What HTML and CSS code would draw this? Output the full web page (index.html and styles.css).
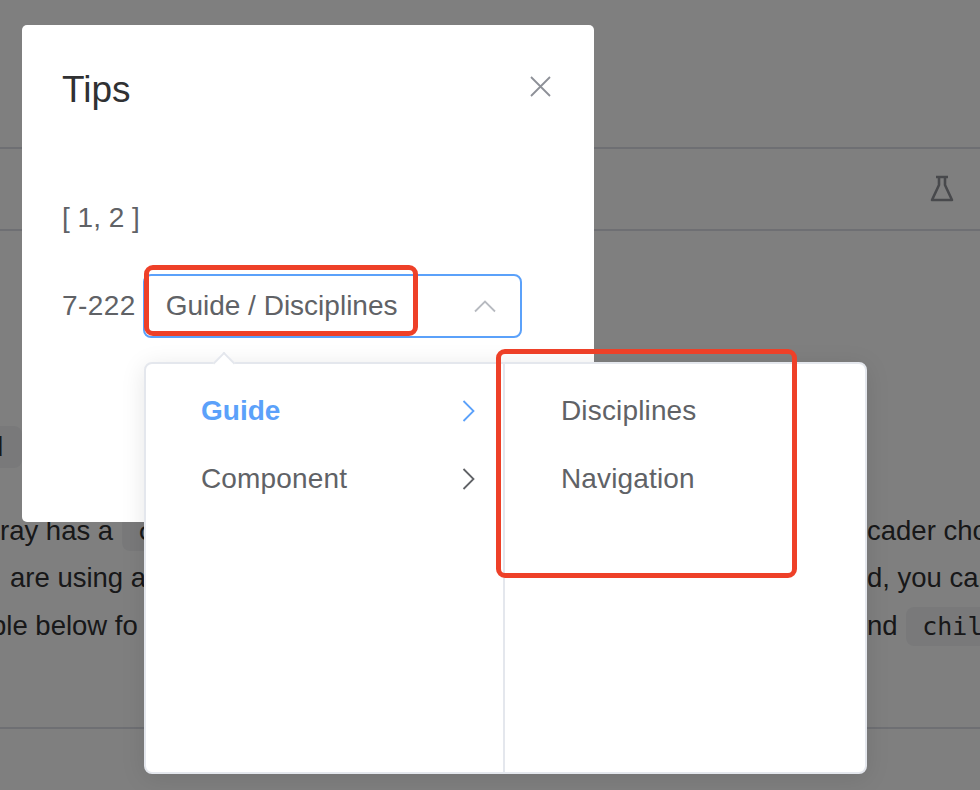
FILE: index.html
```html
<!DOCTYPE html>
<html lang="en">
<head>
<meta charset="utf-8">
<title>Cascader tips</title>
<link rel="stylesheet" href="styles.css">
</head>
<body>
<main class="page">
  <div class="top-band"></div>
  <div class="toolbar">
    <svg class="flask" width="24" height="28" viewBox="0 0 24 28" fill="none" stroke="#909399" stroke-width="2.6" stroke-linejoin="round"><path d="M6 2h12M9 2v8L2 25h20L15 10V2"/></svg>
  </div>
  <section class="doc">
    <div class="doc-line first"><span class="snippet">d</span></div>
    <div class="doc-line para one"><span>ray has a <code>c</code></span><span>cader cho</span></div>
    <div class="doc-line para two"><span>are using a</span><span>d, you can</span></div>
    <div class="doc-line para three"><span>ble below fo</span><span>nd <code>chil</code></span></div>
  </section>
</main>

<div class="overlay"></div>

<div class="modal" role="dialog" aria-label="Tips">
  <header class="modal-head">
    <h2 class="modal-title">Tips</h2>
    <svg class="close" width="21" height="21" viewBox="0 0 21 21" fill="none" stroke="#8d9097" stroke-width="1.8"><path d="M1 1l19 19M20 1L1 20"/></svg>
  </header>
  <p class="value">[ 1, 2 ]</p>
  <div class="field">
    <span class="field-label">7-222</span>
    <div class="select">
      <span>Guide / Disciplines</span>
      <svg width="22" height="14" viewBox="0 0 22 14" fill="none" stroke="#b7bac0" stroke-width="1.8"><path d="M1 12.5L11 2.5l10 10"/></svg>
    </div>
  </div>
</div>

<div class="dropdown">
  <span class="caret"></span>
  <ul class="menu menu-first">
    <li class="item active">
      <span>Guide</span>
      <svg width="13" height="22" viewBox="0 0 13 22" fill="none" stroke="#5ba1fa" stroke-width="1.8"><path d="M1.5 1l10 10-10 10"/></svg>
    </li>
    <li class="item">
      <span>Component</span>
      <svg width="13" height="22" viewBox="0 0 13 22" fill="none" stroke="#606266" stroke-width="1.8"><path d="M1.5 1l10 10-10 10"/></svg>
    </li>
  </ul>
  <ul class="menu menu-second">
    <li class="item">Disciplines</li>
    <li class="item">Navigation</li>
  </ul>
</div>

<div class="mark mark-select"></div>
<div class="mark mark-menu"></div>
</body>
</html>
```

FILE: styles.css
```css
* { box-sizing: border-box; }
html, body { margin: 0; height: 790px; overflow: hidden; }
body {
  position: relative;
  width: 980px;
  background: #fff;
  font-family: "Liberation Sans", Arial, sans-serif;
  color: #606266;
}

/* underlying page */
.page { height: 790px; display: flex; flex-direction: column; color: #303133; }
.top-band { height: 149px; border-bottom: 2px solid #dcdfe6; }
.toolbar {
  height: 82px;
  border-bottom: 2px solid #dcdfe6;
  display: flex;
  align-items: center;
  justify-content: flex-end;
  padding-right: 26px;
}
.flask { display: block; }
.doc { height: 498px; border-bottom: 2px solid #dcdfe6; padding-top: 195px; font-size: 27.5px; }
.doc-line { display: flex; justify-content: space-between; white-space: nowrap; height: 47.3px; line-height: 47.3px; }
.first { height: 81px; margin-left: -12px; }
.snippet { background: #f2f3f5; border-radius: 8px; padding: 0 19px 0 0; height: 42px; line-height: 42px; }
.para > span:last-child { width: 113px; overflow: hidden; }
.two { padding-left: 10px; }
.three { margin-left: -9px; }
code {
  font-family: "DejaVu Sans Mono", monospace;
  font-size: 25px;
  background: #f2f3f5;
  border-radius: 8px;
  padding: 5px 16px;
  margin-left: 1px;
}

.overlay { position: absolute; inset: 0; background: rgba(0, 0, 0, .5); }

/* dialog */
.modal {
  position: absolute;
  left: 22px;
  top: 25px;
  width: 572px;
  height: 497px;
  padding: 40px;
  background: #fff;
  border-radius: 5px;
}
.modal-head { display: flex; justify-content: space-between; align-items: flex-start; }
.modal-title { margin: 0; font-size: 37px; line-height: 50px; font-weight: 400; color: #303133; }
.close { margin: 11px 3px 0 0; }
.value { margin: 83px 0 0; font-size: 28px; line-height: 40px; }
.field { display: flex; align-items: center; gap: 7px; margin-top: 36px; font-size: 28px; }
.field-label { line-height: 64px; letter-spacing: .4px; }
.select {
  width: 379px;
  height: 64px;
  padding: 0 24px 0 21px;
  display: flex;
  align-items: center;
  justify-content: space-between;
  border: 2px solid #5ba1fa;
  border-radius: 8px;
  background: #fff;
}

/* cascader panel */
.dropdown {
  position: absolute;
  left: 144px;
  top: 362px;
  width: 723px;
  height: 412px;
  display: flex;
  background: #fff;
  border: 2px solid #e4e7ed;
  border-radius: 8px;
  box-shadow: 0 4px 24px rgba(0, 0, 0, .1);
  font-size: 28px;
}
.caret {
  position: absolute;
  left: 70px;
  top: -9px;
  width: 16px;
  height: 16px;
  background: #fff;
  border: 2px solid #e4e7ed;
  border-right: 0;
  border-bottom: 0;
  transform: rotate(45deg);
}
.menu { margin: 0; padding: 13px 0; list-style: none; }
.menu-first { width: 359px; border-right: 2px solid #e4e7ed; }
.menu-second { flex: 1; }
.item { height: 68px; display: flex; align-items: center; justify-content: space-between; padding: 0 28px 0 55px; letter-spacing: .15px; }
.menu-second .item { padding-left: 56px; }
.active { color: #5ba1fa; font-weight: 700; letter-spacing: 0; }

/* red annotations */
.mark { position: absolute; border: 5px solid #ee4028; border-radius: 9px; }
.mark-select { left: 144px; top: 265px; width: 274px; height: 71px; }
.mark-menu { left: 496px; top: 349px; width: 301px; height: 229px; }
```
